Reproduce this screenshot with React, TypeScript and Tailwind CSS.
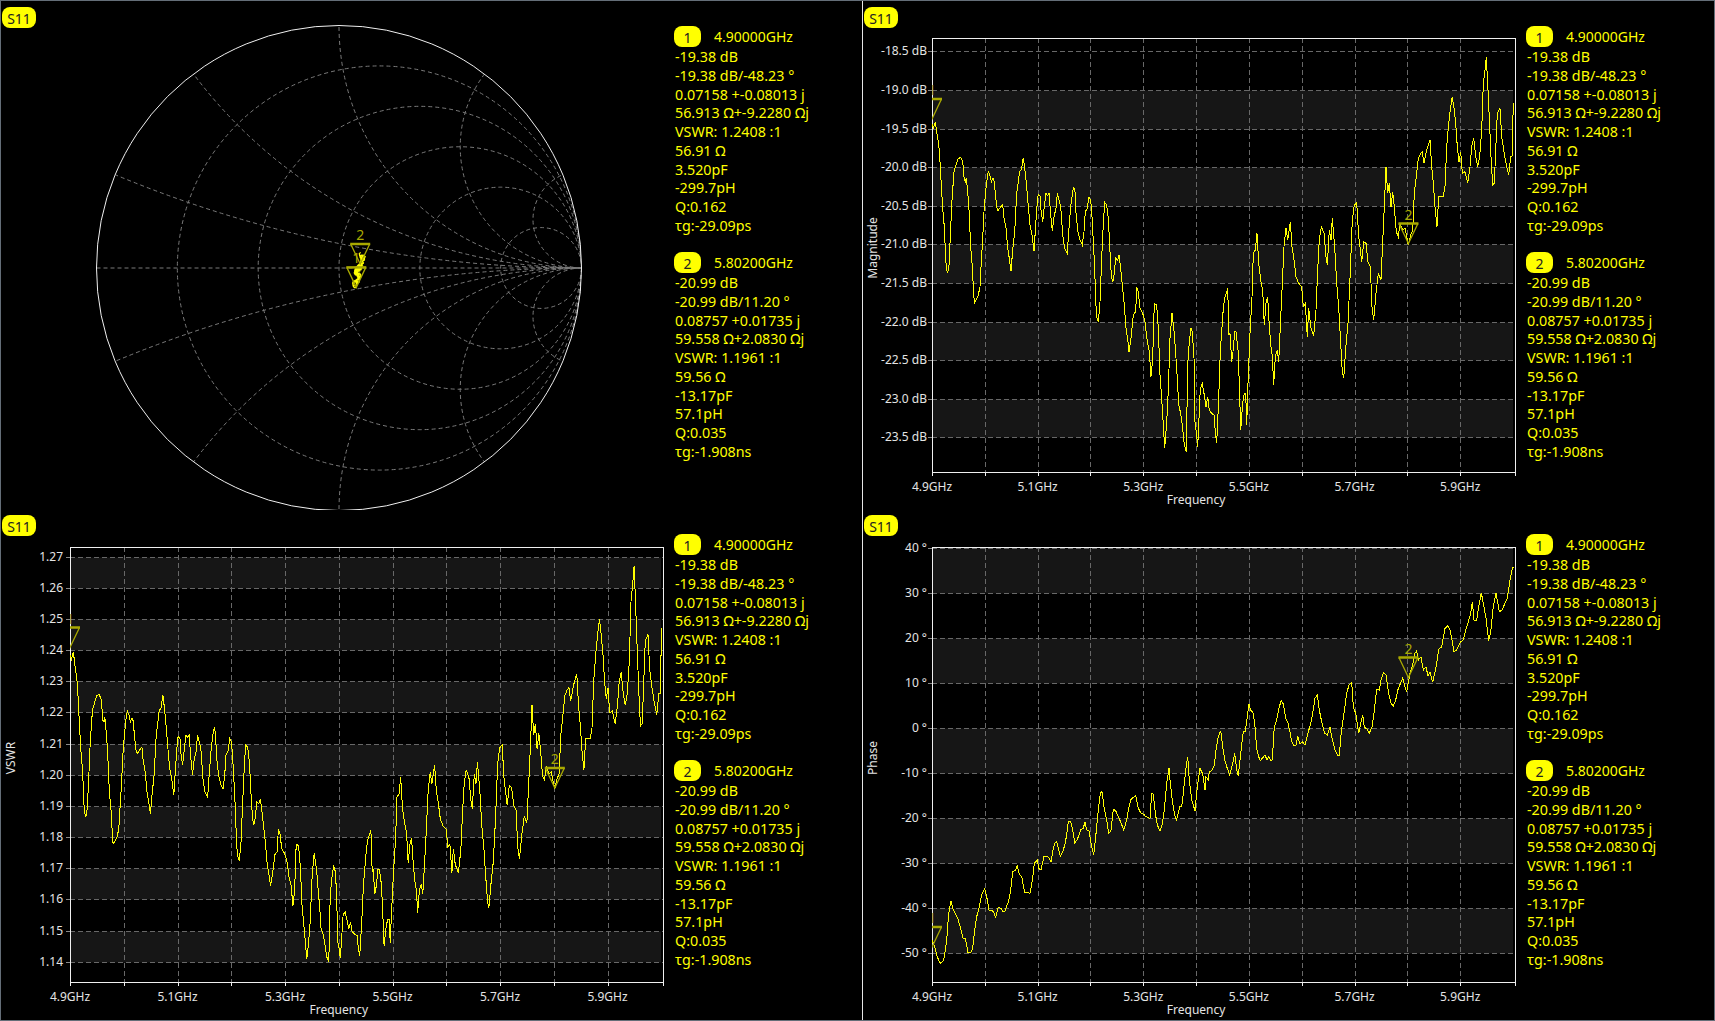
// S11 network analyzer view: smith chart, magnitude, VSWR and phase
type Pt = [number, number];

const toPts = (raw: number[], ox: number, oy: number): Pt[] => {
  const out: Pt[] = [];
  for (let i = 0; i < raw.length; i += 2) out.push([raw[i] / 3 + ox, raw[i + 1] / 3 + oy]);
  return out;
};

// traced by hand from the screen, values are px/3 of the crop
const magPts: Pt[] = [
  ...toPts([6,118,10,130,16,112,20,140,25,170,28,195,31,245,34,300,38,370,43,425,47,525,50,555,53,565,57,540,62,430,65,360,68,315,72,260,78,240,85,220,92,218,98,230,103,285,106,290,109,278,113,320,117,375,122,485,127,545,130,605,133,655,138,645,145,630,150,605,154,530,158,460,162,380,166,330,170,290,175,260,180,272,184,290,187,282,191,280,195,315,200,365,204,378,210,368,218,358,222,400,228,430,233,490,238,520,243,558,248,495,254,440,260,325,265,290,269,258,274,255,280,218,284,250,290,305,295,365,300,420,306,450,312,498,317,420,322,350,325,328,330,332,333,375,338,410,343,365,348,325,352,332,357,325,362,390,367,438,372,395,378,370,382,325,386,340,392,365,398,450,404,490,412,505,416,440,422,365,428,320,431,305,435,320,438,385,444,440,450,465,457,480,462,440,466,380,472,370,477,335,482,345,486,395,490,470,494,550,497,650,500,695,505,712,510,650,515,520,520,415,524,352,530,360,535,400,540,500,544,570,548,592,552,570,557,520,563,525,567,510,572,550,577,600,582,650,588,730,594,770,597,800,603,760,610,690,617,680,620,605,625,620,630,670,638,685,645,710,652,770,658,800,663,875,668,820,673,655,680,660,685,730,690,870,695,940,700,1020,704,1090,708,1040,713,960,716,880,720,760,726,685,733,745,738,820,742,880,746,960,752,985,757,1020,763,1080,769,1100,773,840,778,770,783,730,787,740,792,820,795,1010,800,1050,803,1085,808,980,811,910,817,897,823,930,828,965,833,935,838,975,845,985,852,990,856,1040,860,1075,866,940,871,800,875,740,880,670,885,635,889,625,893,610,897,750], 930, 85),
  ...toPts([30,850,35,935,39,905,44,845,48,845,54,900,58,1000,62,1140,68,1060,73,1030,77,1030,80,1125,84,1000,90,850,96,740,100,610,106,600,111,550,116,640,122,690,128,720,133,825,138,760,143,740,148,830,153,890,157,920,161,1005,166,920,172,900,176,935,181,830,186,720,192,590,198,535,203,570,211,515,216,590,222,630,228,680,236,700,245,710,250,770,256,760,262,860,266,775,272,830,281,858,288,780,293,660,298,570,304,530,312,550,318,620,322,645,328,540,333,570,337,505,344,590,350,700,356,770,362,880,367,965,371,985,378,885,384,820,390,685,397,510,403,465,410,458,416,560,420,590,425,635,431,575,438,580,444,635,451,650,456,770,461,810,468,730,475,670,483,690,488,575,493,470,498,350,503,430,508,400,513,470,518,425,523,470,529,545,535,560,540,520,548,540,555,535,565,585,572,555,578,540,583,430,590,370,595,325,602,310,607,305,612,340,620,300,625,285,630,270,635,350,640,400,645,470,651,530,656,440,670,440,675,410,680,290,686,220,692,170,697,140,702,175,707,220,712,290,717,335,722,305,727,370,735,365,743,400,750,350,755,290,761,265,767,320,773,350,779,320,785,240,790,100,795,60,799,22,803,100,809,230,814,340,818,405,823,400,828,280,832,190,840,175,845,260,851,300,858,340,866,375,872,320,876,320,880,160], 1220, 50),
];

const phasePts: Pt[] = [
  ...toPts([6,720,10,730,15,745,22,770,30,790,38,785,43,770,50,720,56,640,63,602,70,630,78,645,85,660,93,690,99,715,106,715,114,758,122,758,128,745,134,690,140,650,148,620,155,585,164,565,170,590,177,630,186,632,191,637,197,652,205,622,213,625,218,633,225,633,236,602,242,570,248,515,255,512,262,498,268,522,275,530,284,578,295,578,300,580,308,535,313,490,322,480,326,505,333,510,342,468,350,468,356,473,363,485,370,445,375,428,380,425,386,450,391,468,398,455,406,430,412,390,415,365,422,365,428,390,434,428,441,420,447,405,453,388,460,385,465,365,470,390,477,392,483,430,491,465,497,410,504,340,511,280,516,275,522,320,530,360,536,400,543,392,550,328,557,332,565,350,573,368,581,390,590,360,597,320,603,298,610,292,617,287,625,325,633,340,640,342,648,350,660,355,665,280,670,282,676,340,682,375,690,393,697,372,703,330,710,250,717,205,721,250,728,310,734,345,739,360,745,340,750,318,755,320,760,280,767,210,773,170,778,240,785,300,795,332,802,260,810,205,818,222,825,270,828,230,835,240,838,215,845,212,853,195,858,150,865,110,872,92,878,140,884,180,892,205,899,225], 930, 700),
  ...toPts([38,640,44,610,50,660,55,678,62,610,70,545,76,545,82,500,87,462,92,480,100,490,105,530,110,598,116,620,121,632,127,625,135,615,141,630,146,620,152,632,157,630,163,530,170,510,178,470,184,452,190,462,197,505,204,520,210,545,215,575,222,588,228,585,233,558,240,582,247,575,255,585,264,550,272,520,278,490,285,445,292,435,298,480,306,520,314,550,322,555,330,530,336,565,345,600,352,615,358,615,364,545,372,490,380,430,387,405,395,397,400,470,407,490,416,550,422,520,428,495,433,532,441,537,448,550,456,530,462,490,470,418,478,420,484,385,491,368,498,375,506,430,513,460,520,468,527,450,535,415,548,385,555,410,560,425,570,370,578,345,585,310,590,302,595,330,603,320,610,360,618,350,624,378,630,365,638,397,645,365,650,340,656,298,665,290,675,235,683,227,690,240,696,270,702,305,710,300,717,285,722,275,730,270,737,240,745,215,752,190,757,155,762,210,770,210,777,165,784,128,790,160,798,205,806,272,812,245,820,170,828,128,838,185,846,180,855,160,862,145,870,90,876,60,880,50], 1220, 550),
];

// f = 0 at 4.9GHz, 1 at 5.9GHz
const toF = (x: number) => (x - 932) / 528.2;
const mag = magPts.map(([x, y]): Pt => [toF(x), -18.5 - (y - 51.3) / 77.2]);
const phase = phasePts.map(([x, y]): Pt => [toF(x), 40 - (y - 547.7) / 4.507]);

const vswr = (db: number) => {
  const g = Math.pow(10, db / 20);
  return (1 + g) / (1 - g);
};

const phaseAt = (f: number) => {
  for (let i = 1; i < phase.length; i++) {
    if (phase[i][0] >= f) {
      const [f0, p0] = phase[i - 1];
      const [f1, p1] = phase[i];
      return p0 + ((p1 - p0) * (f - f0)) / (f1 - f0 || 1);
    }
  }
  return phase[phase.length - 1][1];
};

function Marker({ x, y, n, clip }: { x: number; y: number; n: number; clip?: string }) {
  return (
    <g clipPath={clip} fill="none" stroke="#a9a900">
      <path d={`M${x - 9.5} ${y - 20}L${x} ${y}L${x + 9.5} ${y - 20}`} strokeWidth="1.3" />
      <path d={`M${x - 10} ${y - 20}H${x + 10}`} strokeWidth="2.5" />
      <text x={x} y={y - 24} fontSize="14" textAnchor="middle" fill="#a9a900" stroke="none">
        {n}
      </text>
    </g>
  );
}

type PlotProps = {
  id: string;
  ox: number;
  oy: number;
  w: number;
  h: number;
  left: number;
  right: number;
  top: number;
  bottom: number;
  pitch: number;
  labelX: number;
  yTicks: { y: number; label: string }[];
  bandStart: number;
  axis: string;
  axisX: number;
  axisY: number;
  trace: Pt[];
  m1: number;
  m2: number;
};

function Plot(p: PlotProps) {
  const fx = (f: number) => p.left + f * 10 * p.pitch;
  const ticks = Array.from({ length: 11 }, (_, i) => Math.round(p.left + i * p.pitch) + 0.5);
  ticks.push(p.right + 0.5);
  const ys = p.yTicks.map((t) => Math.round(t.y) + 0.5);
  const d = p.trace.map(([x, y], i) => `${i ? "L" : "M"}${x.toFixed(1)} ${y.toFixed(1)}`).join("");
  const clip = `url(#${p.id})`;
  const m2x = fx(0.902);
  return (
    <svg
      className="block shrink-0"
      width={p.w}
      height={p.h}
      viewBox={`${p.ox} ${p.oy} ${p.w} ${p.h}`}
    >
      <defs>
        <clipPath id={p.id}>
          <rect x={p.left} y={p.top} width={p.right - p.left} height={p.bottom - p.top} />
        </clipPath>
      </defs>

      {/* bands */}
      {ys.slice(0, -1).map((y, i) =>
        i % 2 === p.bandStart ? (
          <rect key={i} x={p.left} y={y} width={p.right - p.left - 2} height={ys[i + 1] - y} fill="#161616" />
        ) : null
      )}

      {/* grid */}
      <g stroke="#686868" strokeDasharray="5 3" shapeRendering="crispEdges">
        {ticks.slice(1, -1).map((x) => (
          <line key={x} x1={x} x2={x} y1={p.top} y2={p.bottom} />
        ))}
        {ys.map((y) => (
          <line key={y} x1={p.left} x2={p.right} y1={y} y2={y} />
        ))}
      </g>

      {/* frame and ticks */}
      <rect
        x={p.left + 0.5}
        y={p.top + 0.5}
        width={p.right - p.left}
        height={p.bottom - p.top}
        fill="none"
        stroke="#f0f0f0"
        shapeRendering="crispEdges"
      />
      <g stroke="#f0f0f0" shapeRendering="crispEdges">
        {ticks.map((x) => (
          <line key={x} x1={x} x2={x} y1={p.bottom} y2={p.bottom + 4} />
        ))}
      </g>
      <g stroke="#888" shapeRendering="crispEdges">
        {ys.map((y) => (
          <line key={y} x1={p.left - 4} x2={p.left} y1={y} y2={y} />
        ))}
      </g>

      {/* labels */}
      <g fontSize="12" fill="#e4e4e4">
        {p.yTicks.map((t) => (
          <text key={t.label} x={p.labelX} y={t.y + 4} textAnchor="end">
            {t.label}
          </text>
        ))}
        {["4.9GHz", "5.1GHz", "5.3GHz", "5.5GHz", "5.7GHz", "5.9GHz"].map((l, i) => (
          <text key={l} x={p.left + i * 2 * p.pitch} y={p.bottom + 19} textAnchor="middle">
            {l}
          </text>
        ))}
        <text x={fx(0.5)} y={p.bottom + 32} textAnchor="middle">
          Frequency
        </text>
        <text
          transform={`translate(${p.axisX} ${p.axisY}) rotate(-90)`}
          textAnchor="middle"
        >
          {p.axis}
        </text>
      </g>

      <path d={d} clipPath={clip} fill="none" stroke="#ffff00" strokeWidth="1" shapeRendering="crispEdges" />
      <Marker x={p.left} y={p.m1} n={1} clip={clip} />
      <Marker x={m2x} y={p.m2} n={2} />
    </svg>
  );
}

function Smith() {
  const cx = 339;
  const cy = 268;
  const R = 242.5;
  const vals = [0.2, 0.5, 1, 2, 5];
  const pts = mag.map(([f, db]) => {
    const g = Math.pow(10, db / 20);
    const a = (phaseAt(f) * Math.PI) / 180;
    return `${(cx + R * g * Math.cos(a)).toFixed(1)},${(cy - R * g * Math.sin(a)).toFixed(1)}`;
  });
  return (
    <svg className="block shrink-0" width={672} height={509} viewBox="1 1 672 509">
      <defs>
        <clipPath id="smith-clip">
          <circle cx={cx} cy={cy} r={R} />
        </clipPath>
      </defs>
      <g clipPath="url(#smith-clip)" fill="none" stroke="#7a7a7a" strokeDasharray="4 3">
        {vals.map((r) => (
          <circle key={r} cx={cx + (R * r) / (r + 1)} cy={cy} r={R / (r + 1)} />
        ))}
        {vals.map((x) => (
          <g key={x}>
            <circle cx={cx + R} cy={cy - R / x} r={R / x} />
            <circle cx={cx + R} cy={cy + R / x} r={R / x} />
          </g>
        ))}
        <line x1={cx - R} x2={cx + R} y1={cy} y2={cy} />
      </g>
      <circle cx={cx} cy={cy} r={R} fill="none" stroke="#f0f0f0" />
      <polyline points={pts.join(" ")} fill="none" stroke="#ffff00" strokeWidth="1.2" />
      <Marker x={356.3} y={287.4} n={1} />
      <Marker x={360.2} y={264} n={2} />
    </svg>
  );
}

const blocks = [
  {
    n: 1,
    freq: "4.90000GHz",
    rows: [
      "-19.38 dB",
      "-19.38 dB/-48.23 °",
      "0.07158 +-0.08013 j",
      "56.913 Ω+-9.2280 Ωj",
      "VSWR: 1.2408 :1",
      "56.91 Ω",
      "3.520pF",
      "-299.7pH",
      "Q:0.162",
      "τg:-29.09ps",
    ],
  },
  {
    n: 2,
    freq: "5.80200GHz",
    rows: [
      "-20.99 dB",
      "-20.99 dB/11.20 °",
      "0.08757 +0.01735 j",
      "59.558 Ω+2.0830 Ωj",
      "VSWR: 1.1961 :1",
      "59.56 Ω",
      "-13.17pF",
      "57.1pH",
      "Q:0.035",
      "τg:-1.908ns",
    ],
  },
];

function Legend({ lower }: { lower?: boolean }) {
  return (
    <div className={`${lower ? "pt-[24px]" : "pt-[25px]"} pl-px text-[#ffff00] flex flex-col gap-[16.2px]`}>
      {blocks.map((b) => (
        <div key={b.n}>
          <div className="flex items-center h-[21px] mb-px text-[14px]">
            <span className="w-[27px] h-[21px] pt-px rounded-[8px] bg-[#ffff00] text-[#222] flex items-center justify-center">
              {b.n}
            </span>
            <span className="ml-[13px]">{b.freq}</span>
          </div>
          <div className="pl-px whitespace-nowrap text-[14.3px] leading-[18.78px]">
            {b.rows.map((r) => (
              <div key={r}>{r}</div>
            ))}
          </div>
        </div>
      ))}
    </div>
  );
}

function Panel({ children, divider, lower }: { children: React.ReactNode; divider?: boolean; lower?: boolean }) {
  return (
    <div className={`relative flex overflow-hidden ${divider ? "border-l border-[#e6e6e6]" : ""}`}>
      <span
        className={`absolute left-px ${lower ? "top-[5px]" : "top-[6px]"} w-[34px] h-[21px] pt-px rounded-[8px] bg-[#ffff00] text-[#222] text-[14px] flex items-center justify-center`}
      >
        S11
      </span>
      {children}
      <Legend lower={lower} />
    </div>
  );
}

const magTicks = [-18.5, -19, -19.5, -20, -20.5, -21, -21.5, -22, -22.5, -23, -23.5].map((v, i) => ({
  y: 51.3 + i * 38.6,
  label: `${v.toFixed(1)} dB`,
}));

const vswrTicks = [1.27, 1.26, 1.25, 1.24, 1.23, 1.22, 1.21, 1.2, 1.19, 1.18, 1.17, 1.16, 1.15, 1.14].map((v, i) => ({
  y: 556.7 + i * 31.15,
  label: v.toFixed(2),
}));

const phaseTicks = [40, 30, 20, 10, 0, -10, -20, -30, -40, -50].map((v, i) => ({
  y: 547.7 + i * 45.07,
  label: `${v} °`,
}));

export default function App() {
  const magTrace = mag.map(([f, db]): Pt => [932 + f * 528.2, 51.3 - (db + 18.5) * 77.2]);
  const vswrTrace = mag.map(([f, db]): Pt => [70 + f * 537.5, 961.7 - (vswr(db) - 1.14) * 3115]);
  const phaseTrace = phase.map(([f, p]): Pt => [932 + f * 528.2, 547.7 + (40 - p) * 4.507]);

  return (
    <div className="w-[1715px] h-[1021px] bg-black border border-[#646e78] grid grid-cols-[861px_1fr] grid-rows-[509px_1fr] font-['Noto_Sans',sans-serif] overflow-hidden">
      <Panel>
        <Smith />
      </Panel>
      <Panel divider>
        <Plot
          id="mag"
          ox={863}
          oy={1}
          w={662}
          h={509}
          left={932}
          right={1515}
          top={38}
          bottom={472}
          pitch={52.82}
          labelX={927}
          yTicks={magTicks}
          bandStart={1}
          axis="Magnitude"
          axisX={877}
          axisY={248}
          trace={magTrace}
          m1={119}
          m2={243.5}
        />
      </Panel>
      <Panel lower>
        <Plot
          id="vswr"
          ox={1}
          oy={510}
          w={672}
          h={510}
          left={70}
          right={663}
          top={547}
          bottom={982}
          pitch={53.75}
          labelX={63}
          yTicks={vswrTicks}
          bandStart={0}
          axis="VSWR"
          axisX={15}
          axisY={758}
          trace={vswrTrace}
          m1={647.5}
          m2={788}
        />
      </Panel>
      <Panel divider lower>
        <Plot
          id="phase"
          ox={863}
          oy={510}
          w={662}
          h={510}
          left={932}
          right={1515}
          top={547}
          bottom={982}
          pitch={52.82}
          labelX={927}
          yTicks={phaseTicks}
          bandStart={0}
          axis="Phase"
          axisX={877}
          axisY={758}
          trace={phaseTrace}
          m1={947}
          m2={677.5}
        />
      </Panel>
    </div>
  );
}
